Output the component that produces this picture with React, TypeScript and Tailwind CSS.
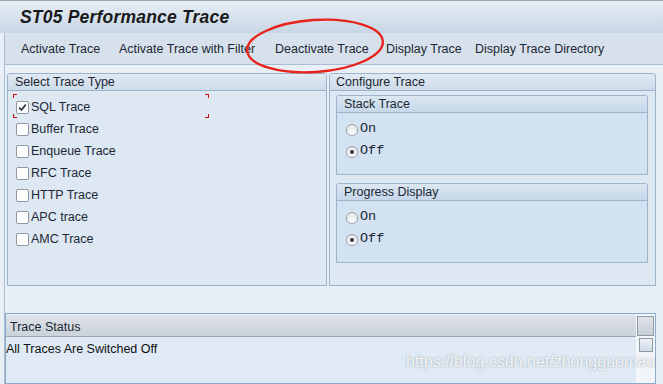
import { ReactNode } from 'react'

const traceTypes = [
  { label: 'SQL Trace', checked: true },
  { label: 'Buffer Trace', checked: false },
  { label: 'Enqueue Trace', checked: false },
  { label: 'RFC Trace', checked: false },
  { label: 'HTTP Trace', checked: false },
  { label: 'APC trace', checked: false },
  { label: 'AMC Trace', checked: false },
]

// slot widths follow the SAP toolbar spacing
const toolbar = [
  { label: 'Activate Trace', className: 'w-[98px]' },
  { label: 'Activate Trace with Filter', className: 'w-[156px]' },
  { label: 'Deactivate Trace', className: 'w-[111px]' },
  { label: 'Display Trace', className: 'w-[89px]' },
  { label: 'Display Trace Directory', className: '' },
]

const sapFont = { fontFamily: '"Liberation Sans", Arial, sans-serif' }

function Checkbox({ checked }: { checked: boolean }) {
  return (
    <span className="flex items-center justify-center w-[13px] h-[13px] rounded-[2px] border border-[#8e98a4] bg-white">
      {checked && (
        <svg width="9" height="9" viewBox="0 0 9 9">
          <path d="M1.2 4.6 L3.5 7 L7.8 1.4" fill="none" stroke="#2a3442" strokeWidth="1.7" />
        </svg>
      )}
    </span>
  )
}

function Radio({ checked }: { checked: boolean }) {
  return (
    <span className="flex items-center justify-center w-[12px] h-[12px] rounded-full border border-[#9ba3ad] bg-gradient-to-b from-[#e4e6e9] to-white">
      {checked && <span className="w-[4px] h-[4px] rounded-full bg-[#2e3440]" />}
    </span>
  )
}

function SubBox({ title, children }: { title: string; children: ReactNode }) {
  return (
    <div className="border border-[#9cb3cc] rounded-t-[3px] bg-[#d3e2f0] h-[80px]">
      <div className="h-[17px] pl-[7px] flex items-center text-[12.5px] text-[#1c2733] bg-gradient-to-b from-[#dce7f2] to-[#c5d7ea] border-b border-[#9cb3cc] rounded-t-[3px]">
        {title}
      </div>
      {children}
    </div>
  )
}

function RadioGroup({ value }: { value: 'On' | 'Off' }) {
  return (
    <div className="pt-[9px] pl-[9px] space-y-[7px]">
      {(['On', 'Off'] as const).map((opt) => (
        <div key={opt} className="flex items-center gap-[2px] h-[15px]">
          <Radio checked={opt === value} />
          <span className="text-[13.5px] text-[#1c2733]" style={{ fontFamily: '"Liberation Mono", "Courier New", monospace' }}>
            {opt}
          </span>
        </div>
      ))}
    </div>
  )
}

export default function App() {
  return (
    <div className="relative w-[663px] h-[384px] overflow-hidden bg-[#e8eff7]" style={sapFont}>
      {/* title bar */}
      <div className="h-[33px] border-t border-[#9aa6b2] bg-gradient-to-b from-[#e7eef6] to-[#c8d6e5] flex items-center pl-[20px]">
        <h1 className="text-[17.5px] font-bold italic text-[#1a1a1a] tracking-[0.2px]">ST05 Performance Trace</h1>
      </div>

      {/* toolbar */}
      <div className="ml-[4px] h-[32px] pt-[2px] border-l border-b border-[#a9bdd2] bg-[#d6e1ec] flex items-center pl-[16px] text-[12.5px] text-[#1c2733]">
        {toolbar.map((item) => (
          <span key={item.label} className={`whitespace-nowrap shrink-0 ${item.className}`}>
            {item.label}
          </span>
        ))}
      </div>

      {/* body */}
      <div className="ml-[4px] border-l border-[#a9bdd2] h-[319px] flex flex-col">
        <div className="flex gap-[2px] pl-[2px] pt-[8px]">
          {/* left group */}
          <div className="w-[320px] h-[213px] border border-[#9cb3cc] rounded-t-[3px] bg-[#dde8f3]">
            <div className="h-[17px] pl-[7px] flex items-center text-[12.5px] text-[#1c2733] bg-gradient-to-b from-[#e1eaf4] to-[#cddbe9] border-b border-[#9cb3cc] rounded-t-[3px]">
              Select Trace Type
            </div>
            <div className="pt-[5px] pl-[8px] flex flex-col">
              {traceTypes.map((t) => (
                <div key={t.label} className="h-[22px] flex items-center gap-[2px] text-[12.5px] text-[#1c2733]">
                  <Checkbox checked={t.checked} />
                  <span>{t.label}</span>
                </div>
              ))}
            </div>
          </div>

          {/* right group */}
          <div className="w-[327px] h-[213px] border border-[#9cb3cc] rounded-t-[3px] bg-[#dde8f3]">
            <div className="h-[17px] pl-[6px] flex items-center text-[12.5px] text-[#1c2733] bg-gradient-to-b from-[#e1eaf4] to-[#cddbe9] border-b border-[#9cb3cc] rounded-t-[3px]">
              Configure Trace
            </div>
            <div className="pt-[4px] px-[6px] pr-[7px] flex flex-col gap-[8px]">
              <SubBox title="Stack Trace">
                <RadioGroup value="Off" />
              </SubBox>
              <SubBox title="Progress Display">
                <RadioGroup value="Off" />
              </SubBox>
            </div>
          </div>
        </div>

        {/* trace status */}
        <div className="mt-[27px] w-[651px] flex-1 border border-[#8eaacb] bg-[#dfeaf4] flex">
          <div className="flex-1 pt-[2px]">
            <div className="h-[21px] pt-[2px] pl-[4px] flex items-center text-[12.5px] text-[#1c2733] bg-gradient-to-b from-[#dde1e7] to-[#cbd2db] border-b border-[#9ba6b3]">
              Trace Status
            </div>
            <div className="pt-[3px] text-[12.5px] text-[#111]">All Traces Are Switched Off</div>
          </div>
          <div className="w-[19px] bg-[#f3f6f9] flex flex-col items-center pt-[2px] gap-[2px]">
            <div className="w-[17px] h-[20px] border border-[#8d99a6] bg-gradient-to-b from-[#dfe3e9] to-[#c8ced6]" />
            <div className="w-[14px] h-[14px] border border-[#8d99a6] bg-gradient-to-b from-[#edf2f7] to-[#cfdae5]" />
          </div>
        </div>
      </div>

      {/* focus brackets around SQL Trace */}
      <div className="absolute left-[13px] top-[94px] w-[196px] h-[24px] pointer-events-none">
        <span className="absolute left-0 top-0 w-[4px] h-[4px] border-l border-t border-[#d01010]" />
        <span className="absolute right-0 top-0 w-[4px] h-[4px] border-r border-t border-[#d01010]" />
        <span className="absolute left-0 bottom-0 w-[4px] h-[4px] border-l border-b border-[#d01010]" />
        <span className="absolute right-0 bottom-0 w-[4px] h-[4px] border-r border-b border-[#d01010]" />
      </div>

      {/* red annotation ellipse */}
      <svg className="absolute left-0 top-0 pointer-events-none" width="663" height="384">
        <ellipse cx="315" cy="46" rx="68" ry="26" transform="rotate(-4 315 46)" fill="none" stroke="#e8231c" strokeWidth="2.4" />
      </svg>

      {/* watermark */}
      <div
        className="absolute left-[406px] top-[350px] text-[16px] text-white/85 pointer-events-none whitespace-nowrap"
        style={{ textShadow: '0 0 2px rgba(110,120,130,0.7)' }}
      >
        https://blog.csdn.net/zhongguomao
      </div>
    </div>
  )
}
